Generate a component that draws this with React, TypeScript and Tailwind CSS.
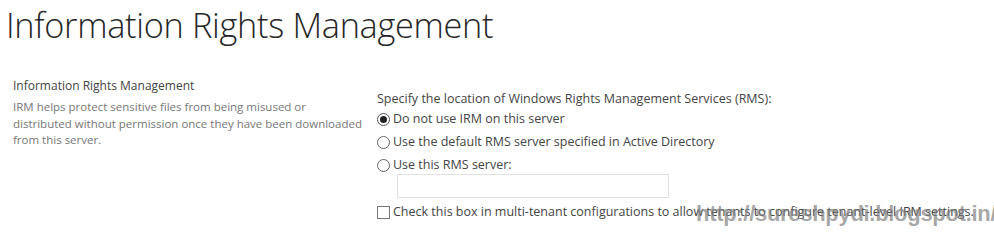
export default function App() {
  return (
    <div className="relative h-[235px] w-[994px] overflow-hidden bg-white font-['Open_Sans',sans-serif]">
      <h1 className="pl-[6px] pt-[2px] text-[34.3px] font-light leading-[46px] tracking-[-0.3px] text-[#262626]">
        Information Rights Management
      </h1>

      <div className="mt-[30px] flex">
        {/* Left description */}
        <div className="w-[364px] pl-[13px]">
          <h2 className="text-[12px] leading-[16px] text-[#444]">Information Rights Management</h2>
          <p className="mt-[5px] text-[11.5px] leading-[16.5px] text-[#777]">
            IRM helps protect sensitive files from being misused or
            <br />
            distributed without permission once they have been downloaded
            <br />
            from this server.
          </p>
        </div>

        {/* Right options */}
        <div className="pl-[13px] pt-[13px] text-[12.5px] text-[#444]">
          <p className="leading-[16px]">Specify the location of Windows Rights Management Services (RMS):</p>
          <div className="mt-[4px] flex flex-col gap-[7px]">
            <label className="flex items-center gap-[3px] leading-[16px]">
              <span className="flex h-[13px] w-[13px] items-center justify-center rounded-full border border-[#555] bg-white">
                <span className="h-[7px] w-[7px] rounded-full bg-[#222]" />
              </span>
              Do not use IRM on this server
            </label>
            <label className="flex items-center gap-[3px] leading-[16px]">
              <span className="h-[13px] w-[13px] rounded-full border border-[#666] bg-white" />
              Use the default RMS server specified in Active Directory
            </label>
            <label className="flex items-center gap-[3px] leading-[16px]">
              <span className="h-[13px] w-[13px] rounded-full border border-[#666] bg-white" />
              Use this RMS server:
            </label>
          </div>
          <div className="ml-[20px] mt-[1px] h-[24px] w-[272px] border border-[#e1e1e1] bg-white" />
          <label className="mt-[6px] flex items-center gap-[3px] whitespace-nowrap leading-[16px]">
            <span className="h-[13px] w-[13px] border border-[#777] bg-white" />
            Check this box in multi-tenant configurations to allow tenants to configure tenant-level IRM settings.
          </label>
        </div>
      </div>

      <div className="absolute left-[696px] top-[199px] whitespace-nowrap font-['Liberation_Sans',sans-serif] text-[22px] font-bold leading-[30px] tracking-[-0.3px] text-[#808080]/70">
        http://sureshpydi.blogspot.in/
      </div>
    </div>
  );
}
